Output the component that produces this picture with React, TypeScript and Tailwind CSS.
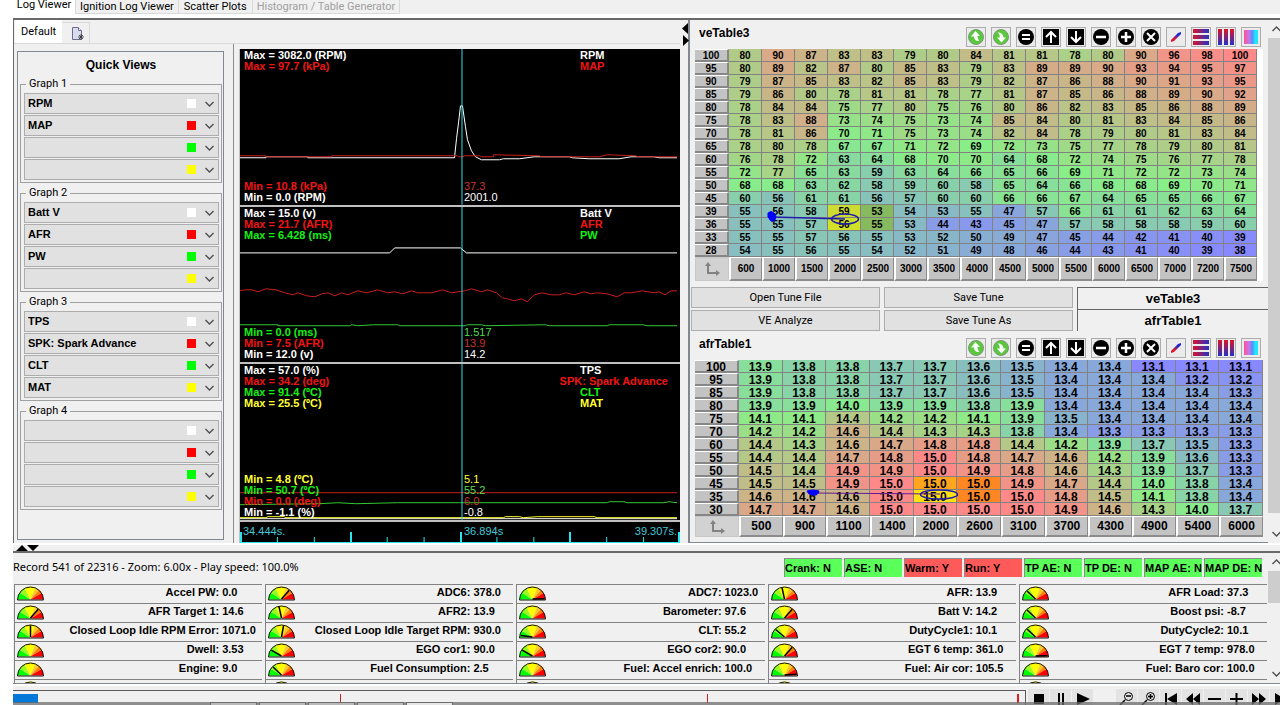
import { useId, useState } from "react";
import type { ReactNode } from "react";

type Trace = { color: string; points: string };
type Label = { text: string; color: string };
type Plot = { max: Label[]; names: Label[]; min: Label[]; values: Label[]; traces: Trace[] };

const WHITE = "text-white";
const RED = "text-[#f01414]";
const DARK_RED = "text-[#c83232]";
const GREEN = "text-[#14f014]";
const YELLOW = "text-[#ffff32]";

const groups = [
  { title: "Graph 1", fields: ["RPM", "MAP", "", ""] },
  { title: "Graph 2", fields: ["Batt V", "AFR", "PW", ""] },
  { title: "Graph 3", fields: ["TPS", "SPK: Spark Advance", "CLT", "MAT"] },
  { title: "Graph 4", fields: ["", "", "", ""] },
];

const swatches = ["bg-white", "bg-[#ff0000]", "bg-[#00ff00]", "bg-[#ffff00]"];

const plots: Plot[] = [
  {
    max: [
      { text: "Max = 3082.0 (RPM)", color: WHITE },
      { text: "Max = 97.7 (kPa)", color: RED },
    ],
    names: [
      { text: "RPM", color: WHITE },
      { text: "MAP", color: RED },
    ],
    min: [
      { text: "Min = 10.8 (kPa)", color: RED },
      { text: "Min = 0.0 (RPM)", color: WHITE },
    ],
    values: [
      { text: "37.3", color: DARK_RED },
      { text: "2001.0", color: WHITE },
    ],
    traces: [
      {
        color: "#ffffff",
        points:
          "0,109 26,109 26,108 68,108 68,109 215,109 217,90 219,74 221,57 223,57 226,78 228,91 232,102 236,108 242,111 260,111 264,110 280,110 295,108 330,108 333,109 350,110 380,110 392,108 415,108 420,109 438,109",
      },
      {
        color: "#c81e1e",
        points: "0,107 26,107 26,108 44,108 92,108 92,107 218,107 219,108 224,108 224,107 240,107 242,108 254,108 254,106 300,107 302,108 360,108 368,106 396,107 400,108 438,108",
      },
    ],
  },
  {
    max: [
      { text: "Max = 15.0 (v)", color: WHITE },
      { text: "Max = 21.7 (AFR)", color: RED },
      { text: "Max = 6.428 (ms)", color: GREEN },
    ],
    names: [
      { text: "Batt V", color: WHITE },
      { text: "AFR", color: RED },
      { text: "PW", color: GREEN },
    ],
    min: [
      { text: "Min = 0.0 (ms)", color: GREEN },
      { text: "Min = 7.5 (AFR)", color: RED },
      { text: "Min = 12.0 (v)", color: WHITE },
    ],
    values: [
      { text: "1.517", color: "text-[#50dc50]" },
      { text: "13.9", color: DARK_RED },
      { text: "14.2", color: WHITE },
    ],
    traces: [
      { color: "#ffffff", points: "0,46 150,46 155,41 221,41 227,46 438,46" },
      {
        color: "#c81e1e",
        points:
          "0,84 5,83 12,83 18,85 26,82 36,83 45,86 53,88 58,86 67,89 75,90 82,87 88,86 95,89 102,86 108,88 118,84 127,86 138,83 148,86 155,85 163,87 172,84 178,86 192,86 203,83 212,86 225,84 232,82 242,85 248,83 257,86 263,91 268,92 275,94 282,92 288,95 295,88 303,86 312,88 320,88 327,86 335,88 345,85 352,87 358,86 368,87 378,90 385,86 392,86 403,84 415,86 420,85 426,88 432,84 438,84",
      },
      { color: "#32c832", points: "0,118 38,118 38,119 72,119 110,119 112,118 118,119 134,118 158,118 160,119 226,119 228,118 242,118 246,119 306,118 310,119 368,119 370,118 404,118 408,119 438,119" },
    ],
  },
  {
    max: [
      { text: "Max = 57.0 (%)", color: WHITE },
      { text: "Max = 34.2 (deg)", color: RED },
      { text: "Max = 91.4 (ºC)", color: GREEN },
      { text: "Max = 25.5 (ºC)", color: YELLOW },
    ],
    names: [
      { text: "TPS", color: WHITE },
      { text: "SPK: Spark Advance", color: RED },
      { text: "CLT", color: GREEN },
      { text: "MAT", color: YELLOW },
    ],
    min: [
      { text: "Min = 4.8 (ºC)", color: YELLOW },
      { text: "Min = 50.7 (ºC)", color: GREEN },
      { text: "Min = 0.0 (deg)", color: RED },
      { text: "Min = -1.1 (%)", color: WHITE },
    ],
    values: [
      { text: "5.1", color: YELLOW },
      { text: "55.2", color: "text-[#50dc50]" },
      { text: "6.0", color: DARK_RED },
      { text: "-0.8", color: WHITE },
    ],
    traces: [
      { color: "#c81e1e", points: "0,129 438,129" },
      { color: "#32c832", points: "0,141 80,140 98,139 116,140 158,139 220,139 240,139 368,139 370,138 385,138 388,139 425,139 430,138 438,139" },
      { color: "#ffffff", points: "0,155 438,155" },
      { color: "#ffff32", points: "0,154 26,154 28,153 44,153 46,154 264,154 266,153 280,153 284,154 298,153 355,153 358,154 438,154" },
    ],
  },
];

const veAxis = [600, 1000, 1500, 2000, 2500, 3000, 3500, 4000, 4500, 5000, 5500, 6000, 6500, 7000, 7200, 7500];
const veLoads = [100, 95, 90, 85, 80, 75, 70, 65, 60, 55, 50, 45, 39, 36, 33, 28];
const veCells = [
  [80, 90, 87, 83, 83, 79, 80, 84, 81, 81, 78, 80, 90, 96, 98, 100],
  [80, 89, 82, 87, 80, 85, 83, 79, 83, 89, 89, 90, 93, 94, 95, 97],
  [79, 87, 85, 83, 82, 85, 83, 79, 82, 87, 86, 88, 90, 91, 93, 95],
  [79, 86, 80, 78, 81, 81, 78, 77, 81, 87, 85, 86, 88, 89, 90, 92],
  [78, 84, 84, 75, 77, 80, 75, 76, 80, 86, 82, 83, 85, 86, 88, 89],
  [78, 83, 88, 73, 74, 75, 73, 74, 85, 84, 80, 81, 83, 84, 85, 86],
  [78, 81, 86, 70, 71, 75, 73, 74, 82, 84, 78, 79, 80, 81, 83, 84],
  [78, 80, 78, 67, 67, 71, 72, 69, 72, 73, 75, 77, 78, 79, 80, 81],
  [76, 78, 72, 63, 64, 68, 70, 70, 64, 68, 72, 74, 75, 76, 77, 78],
  [72, 77, 65, 63, 59, 63, 64, 66, 65, 66, 69, 71, 72, 72, 73, 74],
  [68, 68, 63, 62, 58, 59, 60, 58, 65, 64, 66, 68, 68, 69, 70, 71],
  [60, 56, 61, 61, 56, 57, 60, 60, 66, 66, 67, 64, 65, 65, 66, 67],
  [55, 56, 58, 59, 53, 54, 53, 55, 47, 57, 66, 61, 61, 62, 63, 64],
  [55, 55, 57, 56, 55, 53, 44, 43, 45, 47, 57, 58, 58, 58, 59, 60],
  [55, 55, 57, 56, 55, 53, 52, 50, 49, 47, 45, 44, 42, 41, 40, 39],
  [54, 55, 56, 55, 54, 52, 51, 49, 48, 46, 44, 43, 41, 40, 39, 38],
];

const afrAxis = [500, 900, 1100, 1400, 2000, 2600, 3100, 3700, 4300, 4900, 5400, 6000];
const afrLoads = [100, 95, 85, 80, 75, 70, 60, 55, 50, 45, 35, 30];
const afrCells = [
  [13.9, 13.8, 13.8, 13.7, 13.7, 13.6, 13.5, 13.4, 13.4, 13.1, 13.1, 13.1],
  [13.9, 13.8, 13.8, 13.7, 13.7, 13.6, 13.5, 13.4, 13.4, 13.4, 13.2, 13.2],
  [13.9, 13.8, 13.8, 13.7, 13.7, 13.6, 13.5, 13.4, 13.4, 13.4, 13.4, 13.3],
  [13.9, 13.9, 14.0, 13.9, 13.9, 13.8, 13.9, 13.4, 13.4, 13.4, 13.4, 13.4],
  [14.1, 14.1, 14.4, 14.2, 14.2, 14.1, 13.9, 13.5, 13.4, 13.4, 13.4, 13.4],
  [14.2, 14.2, 14.6, 14.4, 14.3, 14.3, 13.8, 13.4, 13.3, 13.3, 13.3, 13.3],
  [14.4, 14.3, 14.6, 14.7, 14.8, 14.8, 14.4, 14.2, 13.9, 13.7, 13.5, 13.3],
  [14.4, 14.4, 14.7, 14.8, 15.0, 14.8, 14.7, 14.6, 14.2, 13.9, 13.6, 13.3],
  [14.5, 14.4, 14.9, 14.9, 15.0, 14.9, 14.8, 14.6, 14.3, 13.9, 13.7, 13.3],
  [14.5, 14.5, 14.9, 15.0, 15.0, 15.0, 14.9, 14.7, 14.4, 14.0, 13.8, 13.4],
  [14.6, 14.6, 14.6, 15.0, 15.0, 15.0, 15.0, 14.8, 14.5, 14.1, 13.8, 13.4],
  [14.7, 14.7, 14.6, 15.0, 15.0, 15.0, 15.0, 14.9, 14.6, 14.3, 14.0, 13.7],
];

// cells around the current operating point, keyed row-column
const veHits: Record<string, string> = { "12-3": "#cddc32", "13-3": "#d2e128", "12-4": "#87b95f", "13-4": "#87b95f" };
const afrHits: Record<string, string> = { "9-4": "#ffa51e", "10-4": "#ffe114", "9-5": "#ff8723", "10-5": "#ff8723" };

const indicators = [
  { text: "Crank: N", on: false },
  { text: "ASE: N", on: false },
  { text: "Warm: Y", on: true },
  { text: "Run: Y", on: true },
  { text: "TP AE: N", on: false },
  { text: "TP DE: N", on: false },
  { text: "MAP AE: N", on: false },
  { text: "MAP DE: N", on: false },
];

// angle runs 0 (left) to 180 (right), null hides the needle
const gauges: { label: string; value: string; angle: number | null }[] = [
  { label: "Accel PW", value: "0.0", angle: null },
  { label: "ADC6", value: "378.0", angle: 130 },
  { label: "ADC7", value: "1023.0", angle: 176 },
  { label: "AFR", value: "13.9", angle: 78 },
  { label: "AFR Load", value: "37.3", angle: 45 },
  { label: "AFR Target 1", value: "14.6", angle: 130 },
  { label: "AFR2", value: "13.9", angle: 78 },
  { label: "Barometer", value: "97.6", angle: null },
  { label: "Batt V", value: "14.2", angle: 130 },
  { label: "Boost psi", value: "-8.7", angle: 45 },
  { label: "Closed Loop Idle RPM Error", value: "1071.0", angle: 90 },
  { label: "Closed Loop Idle Target RPM", value: "930.0", angle: 100 },
  { label: "CLT", value: "55.2", angle: 10 },
  { label: "DutyCycle1", value: "10.1", angle: 42 },
  { label: "DutyCycle2", value: "10.1", angle: 45 },
  { label: "Dwell", value: "3.53", angle: null },
  { label: "EGO cor1", value: "90.0", angle: 32 },
  { label: "EGO cor2", value: "90.0", angle: 32 },
  { label: "EGT 6 temp", value: "361.0", angle: 130 },
  { label: "EGT 7 temp", value: "978.0", angle: 176 },
  { label: "Engine", value: "9.0", angle: null },
  { label: "Fuel Consumption", value: "2.5", angle: 45 },
  { label: "Fuel: Accel enrich", value: "100.0", angle: null },
  { label: "Fuel: Air cor", value: "105.5", angle: 174 },
  { label: "Fuel: Baro cor", value: "100.0", angle: null },
];

function heat(value: number, low: number, high: number) {
  const t = (value - low) / (high - low);
  const k = t < 0.5 ? t * 2 : (1 - t) * 2;
  const up = Math.round(136 + 102 * k);
  const down = Math.round(136 + 119 * (1 - k));
  return t < 0.5 ? `rgb(136, ${up}, ${down})` : `rgb(${down}, ${up}, 136)`;
}

function Chevron({ up }: { up?: boolean }) {
  return (
    <svg width="9" height="6" viewBox="0 0 9 6" fill="none" stroke="#505050" strokeWidth="1.4">
      <path d={up ? "M.5 5 4.5 1l4 4" : "M.5 1l4 4 4-4"} />
    </svg>
  );
}

function FieldSelect({ name, value, swatch }: { name: string; value: string; swatch: string }) {
  return (
    <div className="relative">
      <select
        aria-label={name}
        defaultValue={value}
        className="block h-[21px] w-full appearance-none border border-[#adadad] bg-[#e1e1e1] pl-[3px] text-[11px] font-bold"
      >
        <option value={value}>{value}</option>
      </select>
      <div className="pointer-events-none absolute inset-y-0 right-[5px] flex items-center gap-[9px]">
        <span className={`size-[9px] ${swatch}`} />
        <Chevron />
      </div>
    </div>
  );
}

function QuickViews() {
  return (
    <div className="mb-[3px] mt-[7px] w-[207px] border border-[#828790] pl-[2px] pr-px pt-[7px]">
      <h2 className="mb-[6px] text-center text-xs/3 font-bold">Quick Views</h2>
      {groups.map((group) => (
        <fieldset key={group.title} className="mb-[3px] border border-[#a0a0a0] pb-[2px] pl-[3px] pr-[2px] pt-[2px]">
          <legend className="ml-[2px] px-[3px] font-[Roboto,sans-serif] text-[11px]/[14px]">{group.title}</legend>
          <div className="flex flex-col gap-px">
            {group.fields.map((field, i) => (
              <FieldSelect key={i} name={`${group.title} field ${i + 1}`} value={field} swatch={swatches[i]} />
            ))}
          </div>
        </fieldset>
      ))}
    </div>
  );
}

function Lines({ items, className }: { items: Label[]; className: string }) {
  return (
    <div className={className}>
      {items.map((item) => (
        <div key={item.text} className={item.color}>
          {item.text}
        </div>
      ))}
    </div>
  );
}

function PlotView({ plot }: { plot: Plot }) {
  return (
    <div className="relative flex flex-1 flex-col justify-between border-b-2 border-[#c0c0c0] bg-black pb-[2px] pl-1 pt-px text-[11px]/[11px] font-bold">
      <svg className="absolute inset-0 size-full" viewBox="0 0 441 156" preserveAspectRatio="none" shapeRendering="crispEdges" fill="none">
        {plot.traces.map((trace) => (
          <polyline key={trace.color} points={trace.points} stroke={trace.color} vectorEffect="non-scaling-stroke" />
        ))}
        <path d="M222.5 0V156" stroke="#32dcf0" vectorEffect="non-scaling-stroke" />
      </svg>
      <Lines items={plot.max} className="relative" />
      <Lines items={plot.names} className="absolute right-3 top-px flex flex-col items-end *:min-w-[88px]" />
      <Lines items={plot.min} className="relative" />
      <Lines items={plot.values} className="absolute bottom-[2px] left-1/2 pl-1 font-normal" />
    </div>
  );
}

function TimeRuler() {
  return (
    <div className="relative flex h-[21px] justify-between bg-black px-[3px] pt-1 text-[11px]/[11px] text-[#46c8d7]">
      <svg className="absolute inset-0 size-full" viewBox="0 0 441 21" preserveAspectRatio="none" shapeRendering="crispEdges" fill="none" stroke="#28e6f0">
        <path d="M0 20.5H441" />
        <path d="M1 10V21M111 10V21M222 10V21M331 10V21M440 10V21" strokeWidth="2" />
        <path d="M37.5 15V21M74.5 15V21M147.5 15V21M184.5 15V21M257.5 15V21M294.5 15V21M367.5 15V21M404.5 15V21" />
      </svg>
      <span className="relative">34.444s.</span>
      <span className="absolute left-1/2 top-1 pl-1">36.894s</span>
      <span className="relative">39.307s.</span>
    </div>
  );
}

function ToolButton({ label, children }: { label: string; children: ReactNode }) {
  return (
    <button aria-label={label} className="flex size-5 items-center justify-center border border-[#adadad] bg-[#ebebeb]">
      <svg width="18" height="18" viewBox="0 0 18 18" fill="none" stroke="#fff" strokeWidth="2">
        {children}
      </svg>
    </button>
  );
}

function TableToolbar({ title }: { title: string }) {
  const id = useId();
  return (
    <div className="flex h-[29px] items-start justify-between pl-1 pr-[2px] pt-[7px]">
      <h3 className="text-xs/3 font-bold">{title}</h3>
      <div className="flex gap-[5px]">
        <ToolButton label="Send">
          <circle cx="9" cy="9" r="7.5" fill="#5ac83c" stroke="#7d9b78" strokeWidth="1" />
          <path d="M8.500 3 13 8h-2.500c.2 2.500 1 4 2 5C9.500 13.500 7 12 7 8.500H4z" fill="#fff" stroke="none" />
        </ToolButton>
        <ToolButton label="Receive">
          <circle cx="9" cy="9" r="7.5" fill="#5ac83c" stroke="#7d9b78" strokeWidth="1" />
          <path d="M9.500 14.500 14 9.500h-2.500C11.300 6.500 9.500 4.500 5.500 4.500c1.600 1 2.300 2.500 2.300 5H5z" fill="#fff" stroke="none" />
        </ToolButton>
        <ToolButton label="Set equal">
          <circle cx="9" cy="9" r="8" fill="#000" stroke="none" />
          <path d="M5 7h8M5 11h8" />
        </ToolButton>
        <ToolButton label="Increase">
          <path d="M1 1h16v16H1z" fill="#000" stroke="none" />
          <path d="M9 15V4M4 9l5-5 5 5" />
        </ToolButton>
        <ToolButton label="Decrease">
          <path d="M1 1h16v16H1z" fill="#000" stroke="none" />
          <path d="M9 3v11M4 9l5 5 5-5" />
        </ToolButton>
        <ToolButton label="Subtract">
          <circle cx="9" cy="9" r="8" fill="#000" stroke="none" />
          <path d="M4 9h10" strokeWidth="2.500" />
        </ToolButton>
        <ToolButton label="Add">
          <circle cx="9" cy="9" r="8" fill="#000" stroke="none" />
          <path d="M4 9h10M9 4v10" strokeWidth="2.500" />
        </ToolButton>
        <ToolButton label="Multiply">
          <circle cx="9" cy="9" r="8" fill="#000" stroke="none" />
          <path d="m5 5 8 8M13 5l-8 8" />
        </ToolButton>
        <ToolButton label="Interpolate">
          <defs>
            <linearGradient id={`${id}d`} x1="0" y1="1" x2="1" y2="0">
              <stop offset=".3" stopColor="#e1142d" />
              <stop offset=".7" stopColor="#1e28d2" />
            </linearGradient>
          </defs>
          <path d="M4 12 11 5l3-1v2l-7 7-3 1z" fill={`url(#${id}d)`} stroke="none" />
        </ToolButton>
        <ToolButton label="Interpolate rows">
          <defs>
            <linearGradient id={`${id}h`}>
              <stop stopColor="#dc1428" />
              <stop offset="1" stopColor="#2332c8" />
            </linearGradient>
          </defs>
          <path d="M1 1h16v4H1zM1 7h16v4H1zM1 13h16v4H1z" fill={`url(#${id}h)`} stroke="none" />
        </ToolButton>
        <ToolButton label="Interpolate columns">
          <defs>
            <linearGradient id={`${id}v`} x2="0" y2="1">
              <stop stopColor="#dc1428" />
              <stop offset="1" stopColor="#2332c8" />
            </linearGradient>
          </defs>
          <path d="M1 1h4v16H1zM7 1h4v16H7zM13 1h4v16h-4z" fill={`url(#${id}v)`} stroke="none" />
        </ToolButton>
        <ToolButton label="Smooth">
          <defs>
            <linearGradient id={`${id}s`}>
              <stop stopColor="#ff5096" />
              <stop offset=".35" stopColor="#c878e6" />
              <stop offset=".6" stopColor="#5a8cff" />
              <stop offset=".8" stopColor="#1ee6ff" />
            </linearGradient>
          </defs>
          <path d="M2 2h14v14H2z" fill={`url(#${id}s)`} stroke="none" />
        </ToolButton>
      </div>
    </div>
  );
}

type HeatTableProps = {
  axis: number[];
  loads: number[];
  cells: number[][];
  hits: Record<string, string>;
  low: number;
  high: number;
  digits: number;
  textClass: string;
  headClass: string;
  axisClass: string;
};

function HeatTable({ axis, loads, cells, hits, low, high, digits, textClass, headClass, axisClass }: HeatTableProps) {
  return (
    <table className={`w-full table-fixed border-separate border-spacing-0 text-center font-bold ${textClass}`}>
      <tbody>
        {cells.map((row, r) => (
          <tr key={loads[r]}>
            <th scope="row" className={`border-b-2 border-r-2 border-t border-[#878787] border-t-white bg-[#c3c3c3] p-0 ${headClass}`}>
              <div className="h-[10px] leading-3">{loads[r]}</div>
            </th>
            {row.map((value, c) => (
              <td
                key={c}
                className="border-b border-r border-[#828282] p-0"
                style={{ backgroundColor: hits[`${r}-${c}`] ?? heat(value, low, high) }}
              >
                <div className="h-3 leading-[14px]">{value.toFixed(digits)}</div>
              </td>
            ))}
          </tr>
        ))}
        <tr>
          <td className="border border-[#c8c8c8] bg-[#d2d2d2] p-0">
            <svg className="mx-auto" width="18" height="16" viewBox="0 0 18 16" fill="none" stroke="#828282" strokeWidth="2">
              <path d="M5 3v9h9" />
              <path d="M2 5l3-4 3 4zM13 9l4 3-4 3z" fill="#828282" stroke="none" />
            </svg>
          </td>
          {axis.map((value) => (
            <th key={value} scope="col" className={`border-b-2 border-l-2 border-r border-t border-[#8c8c8c] border-l-white border-t-white bg-[#c3c3c3] p-0 ${axisClass}`}>
              {value}
            </th>
          ))}
        </tr>
      </tbody>
    </table>
  );
}

function TablesPanel() {
  const pushButton = "h-[21px] border border-[#adadad] bg-[#e1e1e1] pb-px font-[Roboto,sans-serif] text-[11px]/[11px]";
  return (
    <div className="min-w-0 border-b border-[#828790] pb-[5px]">
      <div className="px-[5px]">
        <TableToolbar title="veTable3" />
        <div className="relative bg-white pr-[6px]">
          <HeatTable
            axis={veAxis}
            loads={veLoads}
            cells={veCells}
            hits={veHits}
            low={38}
            high={100}
            digits={0}
            textClass="text-[10px]"
            headClass="w-[34px]"
            axisClass="h-6"
          />
          <svg className="pointer-events-none absolute inset-0 size-full" viewBox="0 0 568 232" preserveAspectRatio="none" fill="none" stroke="#1e1eaa">
            <path d="M77 168 150 170" strokeWidth="1.500" />
            <ellipse cx="150" cy="170" rx="13.500" ry="5" strokeWidth="1.500" />
            <path d="M73 164q3-3 6 0 3 3 1 7-3 3-5 0-1-2-2-3z" fill="#0000ff" stroke="#0000ff" />
          </svg>
        </div>
      </div>
      <div className="mt-[6px] grid grid-cols-[189fr_189fr_191fr] gap-x-1 gap-y-[2px] pl-px">
        <button className={pushButton}>Open Tune File</button>
        <button className={pushButton}>Save Tune</button>
        <div className="row-span-2 grid grid-rows-2 border-l border-[#646464] text-[13px]/[13px] font-bold">
          <button className="border-t border-[#646464]">veTable3</button>
          <button className="border-t border-[#646464]">afrTable1</button>
        </div>
        <button className={pushButton}>VE Analyze</button>
        <button className={pushButton}>Save Tune As</button>
      </div>
      <div className="px-[5px]">
        <TableToolbar title="afrTable1" />
        <div className="relative">
          <HeatTable
            axis={afrAxis}
            loads={afrLoads}
            cells={afrCells}
            hits={afrHits}
            low={13.1}
            high={15}
            digits={1}
            textClass="text-xs"
            headClass="w-[44px]"
            axisClass="h-[21px]"
          />
          <svg className="pointer-events-none absolute inset-0 size-full" viewBox="0 0 568 177" preserveAspectRatio="none" fill="none" stroke="#1e1eaa">
            <path d="M118 133 245 134" stroke="#5a1e96" />
            <ellipse cx="244" cy="134.500" rx="18.500" ry="4.500" strokeWidth="1.500" />
            <path d="M112 131q6-2 12 0-1 5-6 4-5 0-6-4z" fill="#0000ff" stroke="#0000ff" />
          </svg>
        </div>
      </div>
    </div>
  );
}

function ScrollBar({ thumbClass }: { thumbClass: string }) {
  return (
    <div className="flex flex-col overflow-hidden bg-[#f0f0f0]">
      <button aria-label="Scroll up" className="flex h-[18px] w-[17px] shrink-0 items-center justify-center">
        <Chevron up />
      </button>
      <div className={`w-[17px] bg-[#cdcdcd] ${thumbClass}`} />
      <button aria-label="Scroll down" className="mt-auto flex h-[18px] w-[17px] shrink-0 items-center justify-center">
        <Chevron />
      </button>
    </div>
  );
}

function polar(angle: number, r: number) {
  const rad = (angle * Math.PI) / 180;
  return `${(13.5 - r * Math.cos(rad)).toFixed(2)} ${(13.5 - r * Math.sin(rad)).toFixed(2)}`;
}

const sectors: [number, number, string][] = [
  [0, 32, "#00ff00"],
  [32, 62, "#96ff1e"],
  [62, 112, "#ffff00"],
  [112, 132, "#ffc828"],
  [132, 150, "#ff8200"],
  [150, 180, "#ff0000"],
];

function Gauge({ angle }: { angle: number | null }) {
  return (
    <svg className="ml-[2px] mt-px shrink-0" width="27" height="15" viewBox="0 0 27 15" stroke="none">
      {sectors.map(([from, to, fill]) => (
        <path key={from} d={`M13.500 13.500L${polar(from, 13)}A13 13 0 0 1 ${polar(to, 13)}z`} fill={fill} />
      ))}
      <path d="M.5 14A13 13 0 0 1 26.500 14z" fill="none" stroke="#141414" />
      {angle !== null && <path d={`M13.500 13L${polar(angle, 12)}`} stroke="#000" strokeWidth="1.500" />}
    </svg>
  );
}

function TransportButton({ label, children }: { label: string; children: ReactNode }) {
  return (
    <button aria-label={label} className="w-[21px] shrink-0 bg-[#e3e3e3]">
      <svg width="21" height="16" viewBox="0 0 21 16" fill="#000">
        {children}
      </svg>
    </button>
  );
}

export default function App() {
  const [position, setPosition] = useState(0);

  return (
    <div className="flex h-screen flex-col overflow-hidden bg-white pl-[13px] font-[Liberation_Sans,Arial,sans-serif] text-black">
      <nav className="flex h-[14px] shrink-0 bg-[#f0f0f0] font-[Roboto,sans-serif] text-[11px]/[13px]">
        <button className="w-[62px] bg-white pb-1 leading-[10px]">Log Viewer</button>
        <button className="border-x border-b border-[#d9d9d9] px-1">Ignition Log Viewer</button>
        <button className="border-b border-r border-[#d9d9d9] px-[5px]">Scatter Plots</button>
        <button disabled className="border-b border-r border-[#d9d9d9] px-1 text-[#a0a0a0]">
          Histogram / Table Generator
        </button>
      </nav>

      <main className="mt-1 grid shrink-0 grid-cols-[667fr_10px_578fr_12px] border-t-2 border-[#696969] bg-[#f0f0f0]">
        <div className="flex min-w-0 flex-col border-l border-[#696969]">
          <div className="flex h-6 items-end border-b border-[#d9d9d9] pl-px font-[Roboto,sans-serif] text-[11px]/[14px]">
            <button className="h-[23px] bg-white px-[6px]">Default</button>
            <button aria-label="New tab" className="flex h-[21px] w-7 items-center justify-center border-r border-t border-[#d9d9d9]">
              <svg className="ml-1" width="14" height="15" viewBox="0 0 14 15" fill="none">
                <path d="M1.500 1.500h6l3 3v9h-9z" fill="#d7dcf0" stroke="#6e6e8c" />
                <path d="M7.500 1.500v3h3" fill="#fff" stroke="#6e6e8c" />
                <path d="M10 8v6M7 11h6M8 9l4 4M12 9l-4 4" stroke="#323232" strokeWidth=".8" />
              </svg>
            </button>
          </div>
          <div className="flex flex-1">
            <div className="mr-[5px] flex w-[220px] shrink-0 border-r border-[#8c8c8c] pl-[3px]">
              <QuickViews />
            </div>
            <div className="mt-[5px] flex min-w-0 flex-1 flex-col border-l border-[#c0c0c0]">
              {plots.map((plot, i) => (
                <PlotView key={i} plot={plot} />
              ))}
              <TimeRuler />
            </div>
          </div>
        </div>

        <div className="border-r-2 border-[#828790]">
          <svg className="ml-[1px]" width="8" height="28" viewBox="0 0 8 28">
            <path d="M7 3v11L1 8.500zM2 15v11l6-5.500z" />
          </svg>
        </div>

        <TablesPanel />
        <ScrollBar thumbClass="h-[475px]" />
      </main>

      <div className="mt-[2px] h-[6px] shrink-0 bg-[#f0f0f0]">
        <svg className="ml-[3px]" width="24" height="6" viewBox="0 0 24 6">
          <path d="M0 6 6 0l6 6zM11 0h12l-6 6z" />
        </svg>
      </div>

      <section className="grid shrink-0 grid-cols-[1255fr_12px] border-b border-t-2 border-[#828790] border-t-[#696969] bg-[#f0f0f0]">
        <div className="min-w-0">
          <div className="flex h-[31px] items-start justify-between pr-[6px] pt-[5px]">
            <p className="font-[Noto_Sans,sans-serif] text-[11px]/[18px]">Record 541 of 22316 - Zoom: 6.00x - Play speed: 100.0%</p>
            <div className="flex gap-[2px] text-[11px]/[18px] font-bold">
              {indicators.map((item) => (
                <span
                  key={item.text}
                  className={`h-[19px] w-[58px] whitespace-nowrap border-l border-t border-[#8c8c8c] ${item.on ? "bg-[#ff5a5a]" : "bg-[#5aff5a]"}`}
                >
                  {item.text}
                </span>
              ))}
            </div>
          </div>
          <div className="grid h-[99px] grid-cols-5 gap-x-[3px] overflow-hidden pl-px pr-px">
            {gauges.map((gauge) => (
              <div key={gauge.label} className="flex h-[19px] border-l border-t border-[#828282] text-[11px]/[14px] font-bold">
                <Gauge angle={gauge.angle} />
                <span className="flex-1 whitespace-nowrap text-right">{gauge.label}:</span>
                <span className="w-[43px] shrink-0 pl-[3px]">{gauge.value}</span>
              </div>
            ))}
            {[1, 2, 3, 4, 5].map((n) => (
              <div key={n} className="flex h-[19px] border-l border-t border-[#828282]">
                <Gauge angle={null} />
              </div>
            ))}
          </div>
        </div>
        <ScrollBar thumbClass="h-8" />
      </section>

      <footer className="relative mt-[2px] flex flex-1 items-start bg-[#f0f0f0] pt-[3px]">
        <div className="relative mt-px h-[15px] flex-1 border-r border-t border-[#5a5a5a]">
          <input
            type="range"
            aria-label="Playback position"
            min={0}
            max={22316}
            value={position}
            onChange={(e) => setPosition(Number(e.target.value))}
            className="mt-[3px] block h-[9px] w-full appearance-none bg-transparent [&::-webkit-slider-thumb]:h-[9px] [&::-webkit-slider-thumb]:w-[25px] [&::-webkit-slider-thumb]:appearance-none [&::-webkit-slider-thumb]:bg-[#0078d7]"
          />
          <span className="absolute left-[32.3%] top-[3px] h-[9px] w-px bg-[#dc1e1e]" />
          <span className="absolute left-[68.6%] top-[3px] h-[9px] w-px bg-[#dc1e1e]" />
          <span className="absolute left-[99.2%] top-[3px] h-[9px] w-[2px] bg-[#dc1e1e]" />
        </div>
        <div className="ml-[2px] flex gap-px">
          <TransportButton label="Stop">
            <path d="M6 5h10v10H6z" />
          </TransportButton>
          <TransportButton label="Pause">
            <path d="M8 4h2v12H8zM12 4h2v12h-2z" />
          </TransportButton>
          <TransportButton label="Play">
            <path d="M5 4v12l13-6z" />
          </TransportButton>
        </div>
        <div className="-mr-[11px] ml-[23px] flex gap-px">
          <TransportButton label="Zoom out">
            <path d="M9 11 4 16M10 7h5" stroke="#000" strokeWidth="1.500" />
            <circle cx="12.500" cy="7.500" r="4" fill="none" stroke="#000" />
          </TransportButton>
          <TransportButton label="Zoom in">
            <path d="M9 11 4 16M10 7.500h5M12.500 5v5" stroke="#000" strokeWidth="1.500" />
            <circle cx="12.500" cy="7.500" r="4" fill="none" stroke="#000" />
          </TransportButton>
          <TransportButton label="First record">
            <path d="M5 4h2v12H5zM17 4v12L7 10z" />
          </TransportButton>
          <TransportButton label="Rewind">
            <path d="M11 4v12l-7-6zM18 4v12l-7-6z" />
          </TransportButton>
          <TransportButton label="Slower">
            <path d="M4 9h13v2H4z" />
          </TransportButton>
          <TransportButton label="Faster">
            <path d="M4 9h13v2H4zM9.500 4h2v12h-2z" />
          </TransportButton>
          <TransportButton label="Fast forward">
            <path d="M4 4v12l7-6zM11 4v12l7-6z" />
          </TransportButton>
          <TransportButton label="Last record">
            <path d="M5 4v12l10-6zM15 4h2v12h-2z" />
          </TransportButton>
        </div>

        <div className="pointer-events-none absolute inset-x-0 bottom-0 flex h-[3px] gap-[2px] bg-[#6e6e6e]/75 pl-[197px]">
          {[1, 2, 3, 4].map((n) => (
            <span key={n} className="w-[47px] border border-b-0 border-[#6e6e6e] bg-[#b9b9b9]" />
          ))}
          <span className="w-[47px] border border-b-0 border-[#6e6e6e] bg-[#e6e6e6]" />
        </div>
      </footer>
    </div>
  );
}
